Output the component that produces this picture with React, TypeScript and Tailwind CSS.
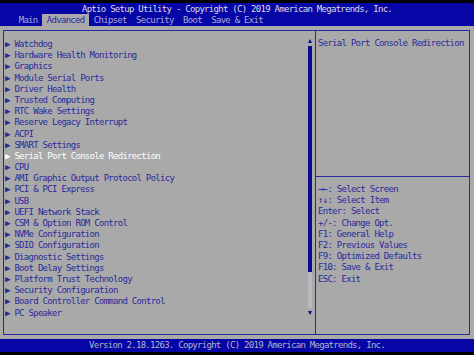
const mono = { fontFamily: '"DejaVu Sans Mono", "Liberation Mono", monospace' };

const menuItems = [
  "Watchdog",
  "Hardware Health Monitoring",
  "Graphics",
  "Module Serial Ports",
  "Driver Health",
  "Trusted Computing",
  "RTC Wake Settings",
  "Reserve Legacy Interrupt",
  "ACPI",
  "SMART Settings",
  "Serial Port Console Redirection",
  "CPU",
  "AMI Graphic Output Protocol Policy",
  "PCI & PCI Express",
  "USB",
  "UEFI Network Stack",
  "CSM & Option ROM Control",
  "NVMe Configuration",
  "SDIO Configuration",
  "Diagnostic Settings",
  "Boot Delay Settings",
  "Platform Trust Technology",
  "Security Configuration",
  "Board Controller Command Control",
  "PC Speaker",
];

const tabs = ["Main", "Advanced", "Chipset", "Security", "Boot", "Save & Exit"];

const helpLines = [
  "→←: Select Screen",
  "↑↓: Select Item",
  "Enter: Select",
  "+/-: Change Opt.",
  "F1: General Help",
  "F2: Previous Values",
  "F9: Optimized Defaults",
  "F10: Save & Exit",
  "ESC: Exit",
];

const selected = "Serial Port Console Redirection";

export default function App() {
  return (
    <div
      className="w-[474px] h-[355px] bg-black flex flex-col pt-[3px] pb-[3px] text-[9px] tracking-[-0.72px] whitespace-pre"
      style={mono}
    >
      {/* header */}
      <div className="bg-[#0606a6] flex flex-col">
        <div className="h-[11px] leading-[12px] text-center text-[#dcdce4]">
          Aptio Setup Utility - Copyright (C) 2019 American Megatrends, Inc.
        </div>
        <div className="h-[12px] flex pl-[14px] leading-[12px]">
          {tabs.map((t) =>
            t === "Advanced" ? (
              <div key={t} className="px-[4.7px] bg-[#a9a9a9] text-[#2a2a9c]">
                {t}
              </div>
            ) : (
              <div key={t} className="px-[4.7px] text-[#a9acd8]">
                {t}
              </div>
            )
          )}
        </div>
      </div>

      {/* body */}
      <div className="flex-1 bg-[#a9a9a9] pt-[4px] pl-[3px] pr-[4px] pb-[4px] flex">
        <div className="flex-1 border border-[#2a2aa0] flex">
          {/* left pane */}
          <div className="w-[312px] border-r border-[#2a2aa0] flex">
            <div className="flex-1 pt-[8px] pl-[1px]">
              {menuItems.map((m) => (
                <div
                  key={m}
                  className={
                    "h-[11.2px] leading-[11.2px] " +
                    (m === selected ? "text-white" : "text-[#2a2a9c]")
                  }
                >
                  {"▶ " + m}
                </div>
              ))}
            </div>
            {/* scrollbar */}
            <div className="w-[4px] mr-[3px] flex flex-col items-center pt-[8px] pb-[19px]">
              <svg width="4" height="4" viewBox="0 0 4 4">
                <path d="M2 0 L4 4 L0 4 Z" fill="#0a0a90" />
              </svg>
              <div className="w-[4px] mt-[3px] h-[226px] bg-[#0a0a90]" />
              <div className="w-[4px] flex-1 bg-[#b8b8c0]" />
              <svg width="4" height="4" viewBox="0 0 4 4" className="mt-[3px]">
                <path d="M0 0 L4 0 L2 4 Z" fill="#0a0a90" />
              </svg>
            </div>
          </div>

          {/* right pane */}
          <div className="flex-1 flex flex-col text-[#2a2a9c]">
            <div className="h-[145px] pt-[7px] pl-[2px]">
              <div className="h-[11.2px] leading-[11.2px]">{selected}</div>
            </div>
            <div className="h-px bg-[#2a2aa0]" />
            <div className="pt-[7px] pl-[2px]">
              {helpLines.map((h) => (
                <div key={h} className="h-[11.2px] leading-[11.2px]">
                  {h}
                </div>
              ))}
            </div>
          </div>
        </div>
      </div>

      {/* footer */}
      <div className="h-[13px] bg-[#0606a6] leading-[13px] text-center text-[#b4b4c8]">
        Version 2.18.1263. Copyright (C) 2019 American Megatrends, Inc.
      </div>
    </div>
  );
}
